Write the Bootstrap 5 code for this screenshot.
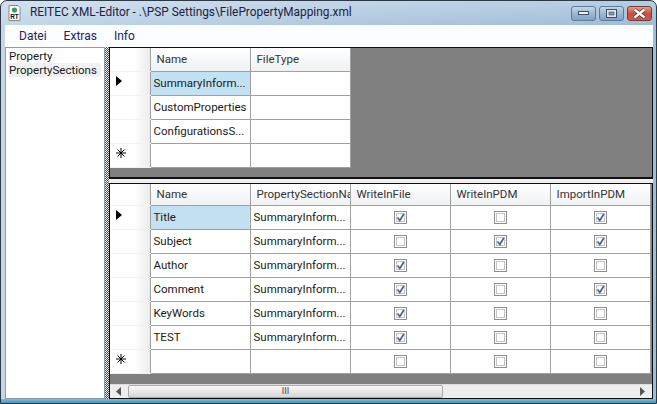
<!DOCTYPE html>
<html lang="de"><head><meta charset="utf-8"><title>REITEC XML-Editor</title>
<link href="https://cdn.jsdelivr.net/npm/bootstrap@5.3.0/dist/css/bootstrap.min.css" rel="stylesheet">
<style>
html,body{margin:0;width:657px;height:404px;overflow:hidden;background:#fff}
body{font-family:Roboto,"Liberation Sans",sans-serif;font-size:11.5px;color:#1a1a1a}
.win{width:657px;height:404px;background:linear-gradient(180deg,rgba(255,255,255,.25),rgba(255,255,255,0) 24px),linear-gradient(90deg,#c4d7ea,#b4cbe2 40%,#9fbcd9);border:1px solid #2c3a48;border-radius:7px 7px 0 0}
.ttl{height:24px;padding-left:6px;gap:8px;color:#1d2240;font-size:11.85px}
.ico{width:15px;height:16px}
.ctrls{gap:3px;margin-left:auto;margin-right:4px}
.cb{width:25px;height:15px;border:1px solid #5d7a9a;border-radius:3px;background:linear-gradient(#c4d6e8,#9db7d3 50%,#86a3c4);display:flex;align-items:center;justify-content:center}
.cb.x{border-color:#7b3a32;background:linear-gradient(#e0a094,#c9503c 50%,#c0604c)}
.menu{height:22px;background:#fcfdfe;margin:0 3px 0 4px;padding-left:14px;gap:17px;font-size:12px;color:#222260}
.body{height:352px;margin:0 3px 0 4px;background:#f0f0f0}
.lst{width:100px;flex:none;background:#fff;border:1px solid #8f9dab;padding:0 3px;line-height:14px;padding-top:1px;font-size:11.5px}
.lst div:last-child{background:#f1f1f1;width:92px}
.vs{width:4px;flex:none;background:repeating-conic-gradient(#555 0 25%,#e8e8e8 0 50%) 0 0/2px 2px}
.rgt{width:544px;flex:none}
.g1{height:132px;background:#808080;border:1px solid #111;border-bottom:2px solid #111}
.hs{height:4px;background:#f0f0f0}
.g2{height:216px;background:#808080;border:1px solid #111}
.dg{border-collapse:collapse;table-layout:fixed;margin:0;background:#fff;line-height:15px;font-size:11.5px}
.dgt{width:240px}
.dgb{width:540px}
.dg th,.dg td{height:24px;border:1px solid #a0a0a0;padding:0 3px;font-weight:400;box-shadow:none;background:#fff;overflow:hidden;white-space:nowrap;vertical-align:middle;color:#1a1a1a}
.dg tr:first-child>*{border-top:0}
.dg tr>*:first-child{border-left:0}
.dg th{height:23px;padding-left:6px;background:linear-gradient(#fff,#f7f8fa 50%,#f0f1f3);color:#333}
.dgb th{height:21px}
.dg .rh{width:40px;padding:0;background:linear-gradient(90deg,#fff 60%,#ececec);border-top-color:#f2f2f2;border-bottom-color:#f2f2f2;color:#000}
.dg .sel{background:#c2e2f4}
.dg .c{width:100px}
.dg .ck{text-align:center;padding:0}
.dg svg{display:block;margin:auto}
.dg .rh svg{margin:-4px 0 0 6px}
.scr{height:14px;background:#eeeeee;margin-top:10px;border-top:1px solid #ddd}
.scr-side{width:18px}
.thumb{width:315px;background:linear-gradient(#fafafa,#e8e8e8 50%,#d6d6d6);border:1px solid #aaa;border-radius:2px;color:#444;font-size:9px;line-height:11px}
.bot{height:4px;background:linear-gradient(#7fbbdc,#4f93bd)}
</style></head><body>
<div class="win d-flex flex-column">
 <div class="ttl d-flex align-items-center">
  <svg class="ico" viewBox="0 0 15 16"><path d="M2 .5h9l2 2v13H2z" fill="#fff" stroke="#888"/><circle cx="7.500" cy="5" r="2.600" fill="#3f9a5a"/><text x="7.500" y="14" font-size="6.500" font-weight="700" text-anchor="middle" fill="#111" font-family="Liberation Sans">RT</text></svg>
  <span>REITEC XML-Editor - .\PSP Settings\FilePropertyMapping.xml</span>
  <div class="ctrls d-flex">
   <div class="cb"><svg width="11" height="5"><rect x=".5" y=".5" width="10" height="3" fill="#eef2f6" stroke="#3c4f66"/></svg></div>
   <div class="cb"><svg width="11" height="9"><rect x=".5" y=".5" width="10" height="8" fill="#dfe8f0" stroke="#3c4f66"/><rect x="3" y="3" width="5" height="3" fill="#7f97b2" stroke="#3c4f66" stroke-width=".6"/></svg></div>
   <div class="cb x"><svg width="15" height="11"><path d="M2.500 1.500 12.500 9.500M12.500 1.500 2.500 9.500" stroke="#4a2a26" stroke-width="3.600"/><path d="M2.500 1.500 12.500 9.500M12.500 1.500 2.500 9.500" stroke="#fff" stroke-width="2.400"/></svg></div>
  </div>
 </div>
 <div class="menu d-flex align-items-center"><span>Datei</span><span>Extras</span><span>Info</span></div>
 <div class="body d-flex">
  <div class="lst"><div>Property</div><div>PropertySections</div></div>
  <div class="vs"></div>
  <div class="rgt d-flex flex-column">
   <div class="g1">
    <table class="dg dgt"><tbody>
     <tr><th class="rh"></th><th class="c">Name</th><th class="c">FileType</th></tr>
     <tr><td class="rh"><svg width="8" height="12"><path d="M0 1l6 5-6 5z" fill="#000"/></svg></td><td class="sel">SummaryInform...</td><td></td></tr>
     <tr><td class="rh"></td><td>CustomProperties</td><td></td></tr>
     <tr><td class="rh"></td><td>ConfigurationsS...</td><td></td></tr>
     <tr><td class="rh"><svg width="10" height="10"><path d="M5 0v10M0 5h10M1.500 1.500l7 7M8.500 1.500l-7 7" stroke="#000"/></svg></td><td></td><td></td></tr>
    </tbody></table>
   </div>
   <div class="hs"></div>
   <div class="g2">
    <svg width="0" height="0" class="d-none"><defs>
     <linearGradient id="bx" x1="0" y1="0" x2="1" y2="1"><stop offset="0" stop-color="#d4d4d4"/><stop offset="1" stop-color="#f7f7f7"/></linearGradient>
     <g id="u"><rect x=".5" y=".5" width="12" height="12" fill="#fff" stroke="#8e8f8f"/><rect x="2.500" y="2.500" width="8" height="8" fill="url(#bx)" stroke="#c4c4c4"/></g>
     <g id="k"><use href="#u"/><path d="M3.500 6.500 5.800 9.500 9.800 3" fill="none" stroke="#45609a" stroke-width="1.700"/></g>
    </defs></svg>
    <table class="dg dgb"><tbody>
     <tr><th class="rh"></th><th class="c">Name</th><th class="c">PropertySectionNa</th><th class="c">WriteInFile</th><th class="c">WriteInPDM</th><th class="c">ImportInPDM</th></tr>
     <tr><td class="rh"><svg width="8" height="12"><path d="M0 1l6 5-6 5z" fill="#000"/></svg></td><td class="sel">Title</td><td>SummaryInform...</td><td class="ck"><svg width="13" height="13"><use href="#k"/></svg></td><td class="ck"><svg width="13" height="13"><use href="#u"/></svg></td><td class="ck"><svg width="13" height="13"><use href="#k"/></svg></td></tr>
     <tr><td class="rh"></td><td>Subject</td><td>SummaryInform...</td><td class="ck"><svg width="13" height="13"><use href="#u"/></svg></td><td class="ck"><svg width="13" height="13"><use href="#k"/></svg></td><td class="ck"><svg width="13" height="13"><use href="#k"/></svg></td></tr>
     <tr><td class="rh"></td><td>Author</td><td>SummaryInform...</td><td class="ck"><svg width="13" height="13"><use href="#k"/></svg></td><td class="ck"><svg width="13" height="13"><use href="#u"/></svg></td><td class="ck"><svg width="13" height="13"><use href="#u"/></svg></td></tr>
     <tr><td class="rh"></td><td>Comment</td><td>SummaryInform...</td><td class="ck"><svg width="13" height="13"><use href="#k"/></svg></td><td class="ck"><svg width="13" height="13"><use href="#u"/></svg></td><td class="ck"><svg width="13" height="13"><use href="#k"/></svg></td></tr>
     <tr><td class="rh"></td><td>KeyWords</td><td>SummaryInform...</td><td class="ck"><svg width="13" height="13"><use href="#k"/></svg></td><td class="ck"><svg width="13" height="13"><use href="#u"/></svg></td><td class="ck"><svg width="13" height="13"><use href="#u"/></svg></td></tr>
     <tr><td class="rh"></td><td>TEST</td><td>SummaryInform...</td><td class="ck"><svg width="13" height="13"><use href="#k"/></svg></td><td class="ck"><svg width="13" height="13"><use href="#u"/></svg></td><td class="ck"><svg width="13" height="13"><use href="#u"/></svg></td></tr>
     <tr><td class="rh"><svg width="10" height="10"><path d="M5 0v10M0 5h10M1.500 1.500l7 7M8.500 1.500l-7 7" stroke="#000"/></svg></td><td></td><td></td><td class="ck"><svg width="13" height="13"><use href="#u"/></svg></td><td class="ck"><svg width="13" height="13"><use href="#u"/></svg></td><td class="ck"><svg width="13" height="13"><use href="#u"/></svg></td></tr>
    </tbody></table>
    <div class="scr d-flex">
     <div class="scr-side d-flex align-items-center justify-content-center"><svg width="6" height="9"><path d="M5 0v9L0 4.500z" fill="#555"/></svg></div>
     <div class="thumb text-center">III</div>
     <div class="flex-grow-1"></div>
     <div class="scr-side d-flex align-items-center justify-content-center"><svg width="6" height="9"><path d="M0 0v9l5-4.500z" fill="#555"/></svg></div>
    </div>
   </div>
  </div>
 </div>
 <div class="bot"></div>
</div>
</body></html>
